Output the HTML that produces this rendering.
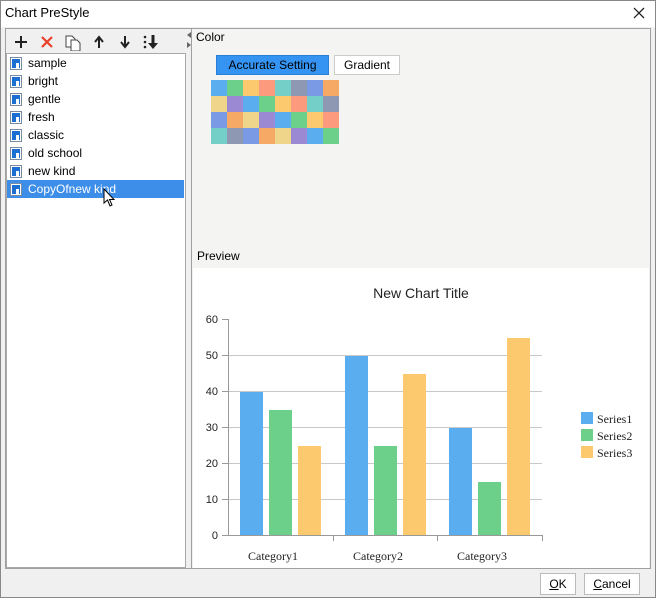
<!DOCTYPE html>
<html><head><style>
*{margin:0;padding:0;box-sizing:border-box}
body{width:656px;height:598px;background:#f0f0f0;font-family:"Liberation Sans","DejaVu Sans",sans-serif;font-size:12px;color:#000;position:relative;overflow:hidden}
.abs{position:absolute}
#win{left:0;top:0;width:656px;height:598px;border:1px solid #888;background:#f0f0f0}
#title{left:1px;top:1px;width:654px;height:26px;background:#fff}
.item{position:absolute;left:8px;height:18px;width:176px;font-size:12px;line-height:18px;padding-left:20px}
.item .ic{position:absolute;left:2px;top:3px;width:12px;height:13px;border:1px solid #7a8aa0;background:#fff}
.item .ic:after{content:"";position:absolute;left:1px;top:1px;width:8px;height:9px;background:#1a6fd0}
.item .ic:before{content:"";position:absolute;left:5px;top:5px;width:3px;height:5px;background:#fff;z-index:1}
.sw{position:absolute;width:16px;height:16px}
</style></head><body>
<div id="win" class="abs"></div>
<div id="title" class="abs"></div>
<div class="abs" style="left:5px;top:5px;font-size:13px">Chart PreStyle</div>
<svg class="abs" style="left:632px;top:6px" width="14" height="14"><path d="M2 2L12 12M12 2L2 12" stroke="#222" stroke-width="1.3"/></svg>
<div class="abs" style="left:5px;top:28px;width:646px;height:541px;border:1px solid #a0a0a0;background:#f0f0f0"></div>
<svg class="abs" style="left:12px;top:33px" width="160" height="18">
<path d="M9 3v12M3 9h12" stroke="#222" stroke-width="2"/>
<path d="M30 4l10 10M40 4L30 14" stroke="#e8402a" stroke-width="2.2"/>
<path d="M54 3h6l3 3v8h-9z" fill="#fff" stroke="#444"/><path d="M59 7h6l3 3v8h-9z" fill="#fff" stroke="#444"/>
<path d="M87 15V5M83 9l4-5 4 5" stroke="#222" stroke-width="2" fill="none"/>
<path d="M113 3v10M109 9l4 5 4-5" stroke="#222" stroke-width="2" fill="none"/>
<circle cx="133" cy="4" r="1.3" fill="#222"/><circle cx="133" cy="9" r="1.3" fill="#222"/><circle cx="133" cy="14" r="1.3" fill="#222"/>
<path d="M141 2v10" stroke="#222" stroke-width="3"/><path d="M136 10h10l-5 6z" fill="#222"/>
</svg>
<div class="abs" style="left:6px;top:53px;width:180px;height:515px;border:1px solid #a9a9a9;background:#fff"></div>
<div class="abs" style="left:7px;top:180px;width:177px;height:18px;background:#3d8ee8"></div>
<div class="item" style="top:54px"><span class="ic"></span>sample</div>
<div class="item" style="top:72px"><span class="ic"></span>bright</div>
<div class="item" style="top:90px"><span class="ic"></span>gentle</div>
<div class="item" style="top:108px"><span class="ic"></span>fresh</div>
<div class="item" style="top:126px"><span class="ic"></span>classic</div>
<div class="item" style="top:144px"><span class="ic"></span>old school</div>
<div class="item" style="top:162px"><span class="ic"></span>new kind</div>
<div class="item" style="top:180px;color:#fff"><span class="ic"></span>CopyOfnew kind</div>
<svg class="abs" style="left:103px;top:188px" width="14" height="20"><path d="M1 1v14l3.5-3 2.5 6 2-1-2.5-5.5H11z" fill="#fff" stroke="#000" stroke-width="1"/></svg>
<svg class="abs" style="left:186px;top:30px" width="6" height="20"><path d="M5 2v6L1 5z M1 12v6l4-3z" fill="#666"/></svg>
<div class="abs" style="left:191px;top:29px;width:1px;height:539px;background:#a0a0a0"></div>
<div class="abs" style="left:192px;top:29px;width:458px;height:239px;background:#f4f4f3"></div>
<div class="abs" style="left:196px;top:30px">Color</div>
<div class="abs" style="left:216px;top:55px;width:113px;height:20px;background:#3593f2;border:1px solid #2a7fd8;text-align:center;line-height:18px">Accurate Setting</div>
<div class="abs" style="left:334px;top:55px;width:66px;height:20px;background:#fff;border:1px solid #ccc;text-align:center;line-height:18px">Gradient</div>
<div id="grid" class="abs" style="left:211px;top:80px;width:128px;height:64px"></div>
<div class="abs" style="left:197px;top:249px">Preview</div>
<div class="abs" style="left:193px;top:268px;width:456px;height:300px;background:#fff"></div>
<svg class="abs" style="left:193px;top:268px" width="456" height="300" font-family="Liberation Serif,serif" font-size="12">
<text x="228" y="30" text-anchor="middle" font-family="Liberation Sans,sans-serif" font-size="14" fill="#222">New Chart Title</text>
<g stroke="#c8c8c8" stroke-width="1">
<path d="M35 87.5H349M35 123.5H349M35 159.5H349M35 195.5H349M35 231.5H349"/>
</g>
<path d="M29 51.5H35M29 87.5H35M29 123.5H35M29 159.5H35M29 195.5H35M29 231.5H35M29 267.5H35" stroke="#999"/>
<path d="M35.5 51V267.5H349.5V273M140.5 267V273M244.5 267V273" stroke="#999" fill="none"/>
<g font-family="Liberation Sans,sans-serif" font-size="11" fill="#222" text-anchor="end">
<text x="25" y="55">60</text><text x="25" y="91">50</text><text x="25" y="127">40</text><text x="25" y="163">30</text><text x="25" y="199">20</text><text x="25" y="235">10</text><text x="25" y="271">0</text></g>
<g fill="#5aaef0"><rect x="47" y="124" width="23" height="143"/><rect x="152" y="88" width="23" height="179"/><rect x="256" y="160" width="23" height="107"/></g>
<g fill="#6ccf8a"><rect x="76" y="142" width="23" height="125"/><rect x="181" y="178" width="23" height="89"/><rect x="285" y="214" width="23" height="53"/></g>
<g fill="#fdc96f"><rect x="105" y="178" width="23" height="89"/><rect x="210" y="106" width="23" height="161"/><rect x="314" y="70" width="23" height="197"/></g>
<g fill="#222" text-anchor="middle"><text x="80" y="292">Category1</text><text x="185" y="292">Category2</text><text x="289" y="292">Category3</text></g>
<rect x="388" y="144" width="12" height="12" fill="#5aaef0"/><rect x="388" y="161" width="12" height="12" fill="#6ccf8a"/><rect x="388" y="178" width="12" height="12" fill="#fdc96f"/>
<g fill="#222"><text x="404" y="155">Series1</text><text x="404" y="172">Series2</text><text x="404" y="189">Series3</text></g>
</svg>
<div class="abs" style="left:540px;top:573px;width:36px;height:22px;background:#fff;border:1px solid #bbb;text-align:center;line-height:20px"><u>O</u>K</div>
<div class="abs" style="left:584px;top:573px;width:56px;height:22px;background:#fff;border:1px solid #bbb;text-align:center;line-height:20px"><u>C</u>ancel</div>
<script>
var c={b:"#5aaef0",g:"#6ccf8a",y:"#fdc96f",s:"#fb9a7c",t:"#75cfc9",r:"#8e98b3",p:"#7b9ae6",o:"#f5a964",d:"#efd58a",u:"#9b89d4"};
var rows=["bgystrpo","dubgystr","podubgys","trpodubg"];var h="";
rows.forEach(function(r,i){for(var j=0;j<8;j++)h+='<div class="sw" style="left:'+j*16+'px;top:'+i*16+'px;background:'+c[r[j]]+'"></div>';});
document.getElementById("grid").innerHTML=h;
</script>
</body></html>
